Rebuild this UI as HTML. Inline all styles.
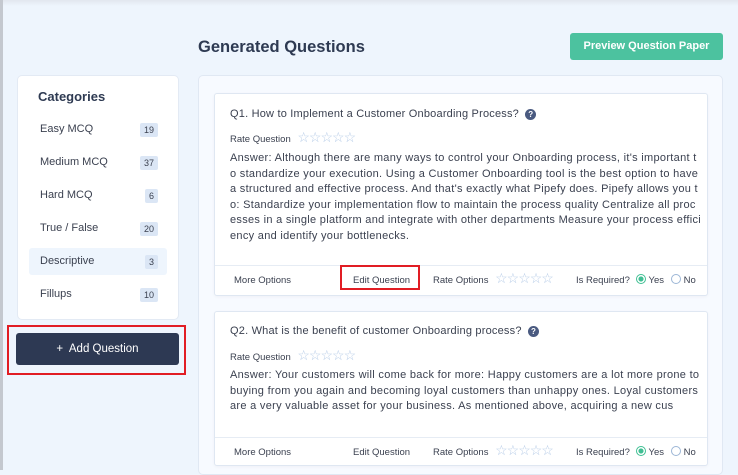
<!DOCTYPE html>
<html><head><meta charset="utf-8"><style>
*{margin:0;padding:0;box-sizing:border-box}
body{width:738px;height:470px;overflow:hidden;background:#eef5fd;font-family:"Liberation Sans",sans-serif;color:#3b4150;position:relative}
.abs{position:absolute}
.leftbar{left:0;top:0;width:3px;height:470px;background:#c4c8cf}
.topsh{left:0;top:0;width:738px;height:6px;background:linear-gradient(#e2e7ef,#eef5fd)}
h1{position:absolute;left:198px;top:38px;font-size:16.5px;font-weight:bold;color:#2e3a52}
.prev{left:570px;top:33px;width:153px;height:27px;background:#4cc29f;border-radius:3px;color:#fff;font-size:11px;font-weight:bold;text-align:center;line-height:27px}
.cat{left:17px;top:75px;width:162px;height:245px;background:#fff;border-radius:5px;border:1px solid #e3eaf4}
.cat h2{position:absolute;left:20px;top:13px;font-size:13px;font-weight:bold;color:#2e3a52}
.row{position:absolute;left:11px;width:138px;height:27px;font-size:11px;line-height:27px;padding-left:11px;color:#3b4150}
.row.sel{background:#eef5fd;border-radius:3px}
.badge{position:absolute;right:9px;top:7px;height:14px;padding:0 4px;background:#dbe6f5;border-radius:2px;font-size:9px;line-height:14px;color:#3b4150}
.redbox{border:2px solid #e11d24}
.add{left:16px;top:333px;width:163px;height:32px;background:#2d3953;border-radius:3px;color:#fff;font-size:11.5px;text-align:center;line-height:32px}
.panel{left:198px;top:75px;width:525px;height:400px;background:#f7faff;border:1px solid #e0e8f3;border-radius:5px}
.card{position:absolute;left:214px;width:494px;background:#fff;border:1px solid #dfe7f2;border-radius:3px;box-shadow:0 1px 3px rgba(0,0,0,.04)}
.q{position:absolute;left:15px;font-size:11px;color:#3b4150;white-space:nowrap;letter-spacing:.2px}
.help{display:inline-block;width:11px;height:11px;border-radius:50%;background:#4a5a80;color:#fff;font-size:8px;line-height:11px;text-align:center;font-weight:bold;vertical-align:0;margin-left:3px;letter-spacing:0}
.rq{position:absolute;left:15px;font-size:9.5px;color:#3b4150;white-space:nowrap;line-height:14px}
.stars{color:#b8cde8;font-size:14px;letter-spacing:-1px;margin-left:4px;line-height:14px}
.ans{position:absolute;left:15px;width:472px;font-size:11px;line-height:15.5px;letter-spacing:.3px;color:#3b4150;word-break:break-all}
.foot{position:absolute;left:0;width:492px;height:30px;border-top:1px solid #e6ecf4;font-size:9.5px;color:#3b4150}
.foot span.i{position:absolute;top:0;height:29px;line-height:29px;white-space:nowrap}
.radio{display:inline-block;width:10px;height:10px;border-radius:50%;border:1px solid #9cb6d6;vertical-align:-1px;margin-right:3px}
.radio.on{border-color:#3fbf93;background:radial-gradient(#3fbf93 40%,#fff 50%)}
</style></head><body>
<div class="abs topsh"></div>
<div class="abs leftbar"></div>
<h1>Generated Questions</h1>
<div class="abs prev">Preview Question Paper</div>

<div class="abs cat">
<h2>Categories</h2>
<div class="row" style="top:40px">Easy MCQ<span class="badge">19</span></div>
<div class="row" style="top:73px">Medium MCQ<span class="badge">37</span></div>
<div class="row" style="top:106px">Hard MCQ<span class="badge">6</span></div>
<div class="row" style="top:139px">True / False<span class="badge">20</span></div>
<div class="row sel" style="top:172px">Descriptive<span class="badge">3</span></div>
<div class="row" style="top:205px">Fillups<span class="badge">10</span></div>
</div>
<div class="abs redbox" style="left:7px;top:325px;width:179px;height:50px"></div>
<div class="abs add">+&nbsp; Add Question</div>

<div class="abs panel"></div>

<div class="card" style="top:93px;height:203px">
<div class="q" style="top:14px">Q1. How to Implement a Customer Onboarding Process? <span class="help">?</span></div>
<div class="rq" style="top:36px">Rate Question <span class="stars">☆☆☆☆☆</span></div>
<div class="ans" style="top:57px">Answer: Although there are many ways to control your Onboarding process, it's important to standardize your execution. Using a Customer Onboarding tool is the best option to have a structured and effective process. And that's exactly what Pipefy does. Pipefy allows you to: Standardize your implementation flow to maintain the process quality Centralize all processes in a single platform and integrate with other departments Measure your process efficiency and identify your bottlenecks.</div>
<div class="foot" style="top:171px">
<span class="i" style="left:19px">More Options</span>
<span class="i" style="left:138px">Edit Question</span>
<span class="i" style="left:218px">Rate Options <span class="stars">☆☆☆☆☆</span></span>
<span class="i" style="left:361px">Is Required? <span class="radio on" style="margin-left:3px"></span>Yes <span class="radio" style="margin-left:4px"></span>No</span>
</div>
</div>
<div class="abs redbox" style="left:340px;top:265px;width:80px;height:25px"></div>

<div class="card" style="top:311px;height:155px">
<div class="q" style="top:13px">Q2. What is the benefit of customer Onboarding process? <span class="help">?</span></div>
<div class="rq" style="top:36px">Rate Question <span class="stars">☆☆☆☆☆</span></div>
<div class="ans" style="top:56px">Answer: Your customers will come back for more: Happy customers are a lot more prone to buying from you again and becoming loyal customers than unhappy ones. Loyal customers are a very valuable asset for your business. As mentioned above, acquiring a new cus</div>
<div class="foot" style="top:125px">
<span class="i" style="left:19px">More Options</span>
<span class="i" style="left:138px">Edit Question</span>
<span class="i" style="left:218px">Rate Options <span class="stars">☆☆☆☆☆</span></span>
<span class="i" style="left:361px">Is Required? <span class="radio on" style="margin-left:3px"></span>Yes <span class="radio" style="margin-left:4px"></span>No</span>
</div>
</div>
</body></html>
